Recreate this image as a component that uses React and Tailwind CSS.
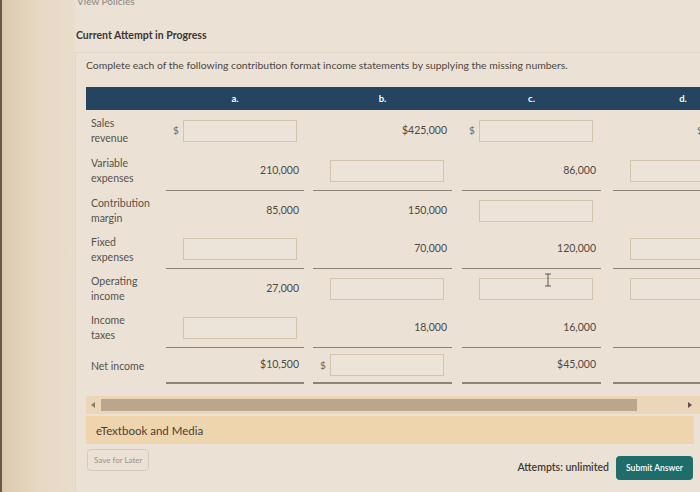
const rows = [
  {
    label: ["Sales", "revenue"],
    h: "h-[41px]",
    line: "",
    cells: [{ dollar: true, input: true }, { value: "$425,000" }, { dollar: true, input: true }, { farDollar: true }],
  },
  {
    label: ["Variable", "expenses"],
    h: "h-[40px]",
    line: "border-b border-[#8d8377]",
    cells: [{ value: "210,000" }, { input: true }, { value: "86,000" }, { input: true }],
  },
  {
    label: ["Contribution", "margin"],
    h: "h-[39px]",
    line: "",
    cells: [{ value: "85,000" }, { value: "150,000" }, { input: true }, {}],
  },
  {
    label: ["Fixed", "expenses"],
    h: "h-[39px]",
    line: "border-b border-[#8d8377]",
    cells: [{ input: true }, { value: "70,000" }, { value: "120,000" }, { input: true }],
  },
  {
    label: ["Operating", "income"],
    h: "h-[39px]",
    line: "",
    cells: [{ value: "27,000" }, { input: true }, { input: true, cursor: true }, { input: true }],
  },
  {
    label: ["Income", "taxes"],
    h: "h-[40px]",
    line: "border-b border-[#8d8377]",
    cells: [{ input: true }, { value: "18,000" }, { value: "16,000" }, {}],
  },
  {
    label: ["Net income"],
    h: "h-[36px]",
    line: "border-b-2 border-[#8d8377]",
    cells: [{ value: "$10,500" }, { dollar: true, input: true }, { value: "$45,000" }, {}],
  },
];

const colClass = ["w-[138px]", "ml-[9px] w-[139px]", "ml-[10px] w-[139px]", "ml-[12px] w-[140px] shrink-0"];

function Cell({ cell, cls, line }) {
  return (
    <div className={`relative flex h-full shrink-0 items-center ${cls} ${line}`}>
      {cell.dollar && (
        <span className="absolute left-[7px] text-[10px] text-[#6a625a]">$</span>
      )}
      {cell.farDollar && (
        <span className="absolute left-[84px] text-[10px] text-[#6a625a]">$</span>
      )}
      {cell.input && (
        <div className="ml-[17px] h-[22px] w-[114px] shrink-0 border border-[#d3c4ae] bg-[#ece4d8]" />
      )}
      {cell.value && (
        <span className="ml-auto pr-[5px] text-[10.5px] text-[#4e4943]">{cell.value}</span>
      )}
      {cell.cursor && (
        <svg className="absolute left-[82px] top-[4px]" width="8" height="14" viewBox="0 0 8 14">
          <path d="M1 1h6M4 1v12M1 13h6" stroke="#5a5550" strokeWidth="1" fill="none" />
        </svg>
      )}
    </div>
  );
}

export default function App() {
  return (
    <div
      className="flex h-[492px] w-[700px] overflow-hidden bg-[#ebe2d5] text-[#3b3733]"
      style={{ fontFamily: "Lato, 'Open Sans', sans-serif" }}
    >
      <div className="h-full w-[75px] shrink-0 border-l-2 border-[#6b5846] bg-gradient-to-r from-[#dcc9ae] via-[#e7d8c3] to-[#e9ddcc]" />
      <div className="flex min-w-0 flex-1 flex-col">
        <div className="-mt-[6px] h-[12px] pl-[2px] text-[10px] text-[#8a8580]">View Policies</div>
        <div className="mt-[22px] pl-[1px] text-[10.5px] font-bold text-[#3a3633]">
          Current Attempt in Progress
        </div>
        <div className="mt-[8px] flex flex-1 flex-col border-l border-t border-[#e2d8c9] pl-[10px]">
          <div className="mt-[5px] text-[10.4px] text-[#4b4641]">
            Complete each of the following contribution format income statements by supplying the missing numbers.
          </div>

          <div className="mt-[14px] flex flex-col">
            <div className="flex h-[23px] items-center bg-[#254460] text-[9.5px] font-bold text-white">
              <div className="w-[80px] shrink-0" />
              <div className={`${colClass[0]} shrink-0 text-center`}>a.</div>
              <div className={`${colClass[1]} shrink-0 text-center`}>b.</div>
              <div className={`${colClass[2]} shrink-0 text-center`}>c.</div>
              <div className={`${colClass[3]} text-center`}>d.</div>
            </div>

            {rows.map((row) => (
              <div key={row.label.join(" ")} className={`flex ${row.h}`}>
                <div className="flex w-[80px] shrink-0 flex-col justify-center pl-[5px] text-[10.5px] leading-[15px] text-[#57524c]">
                  {row.label.map((l) => (
                    <span key={l}>{l}</span>
                  ))}
                </div>
                {row.cells.map((cell, i) => (
                  <Cell key={i} cell={cell} cls={colClass[i]} line={row.line} />
                ))}
              </div>
            ))}
          </div>

          <div className="mt-[12px] flex h-[18px] w-[615px] items-center bg-[#ead6b8]">
            <span className="ml-[5px] h-0 w-0 border-y-[3px] border-r-[4px] border-y-transparent border-r-[#8a7b69]" />
            <div className="ml-[6px] h-[12px] w-[536px] bg-[#b9a68c]" />
            <span className="ml-auto mr-[9px] h-0 w-0 border-y-[3px] border-l-[4px] border-y-transparent border-l-[#5a5048]" />
          </div>

          <div className="mt-[2px] flex h-[28px] w-[608px] items-center bg-[#efd5ad] pl-[10px] text-[11.5px] text-[#4a4039]">
            eTextbook and Media
          </div>

          <div className="mt-[5px] flex w-[607px] items-start justify-between">
            <div className="ml-[1px] flex h-[22px] items-center rounded-sm border border-[#d6cabb] px-[6px] text-[8px] text-[#9b918a]">
              Save for Later
            </div>
            <div className="mt-[7px] flex items-center">
              <span className="text-[10.5px] font-semibold text-[#3d3834]">Attempts: unlimited</span>
              <div className="ml-[7px] flex h-[24px] w-[77px] items-center justify-center rounded-sm bg-[#1e6d6a] text-[8.5px] font-semibold text-white">
                Submit Answer
              </div>
            </div>
          </div>
        </div>
      </div>
    </div>
  );
}
